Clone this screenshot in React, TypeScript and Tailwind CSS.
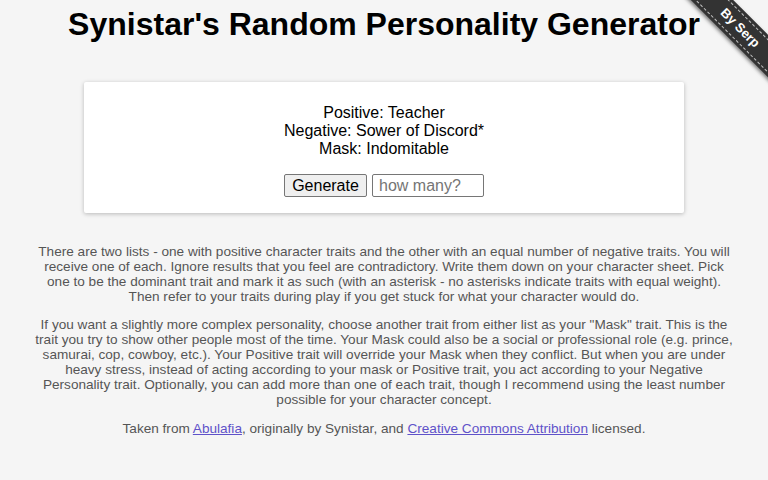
import React from 'react';

const App: React.FC = () => {
  return (
    <div className="relative min-h-[480px] w-full overflow-hidden bg-[#f5f5f5] font-['Liberation_Sans',Arial,sans-serif]">
      {/* Ribbon */}
      <div className="absolute right-[-57px] top-[13px] w-[170px] rotate-45 bg-[#333] py-[3px] shadow-[0_2px_4px_rgba(0,0,0,0.5)]">
        <div className="border-y border-dashed border-white/70 py-[3px] text-center text-[13px] font-bold leading-[16px] text-white">
          By Serp
        </div>
      </div>

      <h1 className="pt-[6px] text-center text-[32px] font-bold leading-[37px] text-black">
        Synistar's Random Personality Generator
      </h1>

      {/* Card */}
      <div className="mx-auto mt-[39px] w-[600px] rounded-[2px] bg-white pb-[16px] pt-[22px] text-center shadow-[0_1px_4px_rgba(0,0,0,0.25)]">
        <div className="text-[16px] leading-[18px] text-black">
          <div>Positive: Teacher</div>
          <div>Negative: Sower of Discord*</div>
          <div>Mask: Indomitable</div>
        </div>
        <div className="mt-[16px] flex items-center justify-center gap-[5px]">
          <button className="h-[23px] w-[83px] rounded-[2px] border border-[#767676] bg-[#efefef] text-[16px] leading-[18px] text-black">
            Generate
          </button>
          <input
            placeholder="how many?"
            className="h-[23px] w-[112px] rounded-[2px] border border-[#767676] bg-white px-[6px] text-[16px] text-black placeholder:text-[#757575]"
          />
        </div>
      </div>

      {/* Description */}
      <div className="mx-auto mt-[31px] w-[700px] text-center text-[13.6px] leading-[15px] text-[#555]">
        <p>
          There are two lists - one with positive character traits and the other with an equal number of negative traits. You will receive one of each. Ignore results that you feel are contradictory. Write them down on your character sheet. Pick one to be the dominant trait and mark it as such (with an asterisk - no asterisks indicate traits with equal weight). Then refer to your traits during play if you get stuck for what your character would do.
        </p>
        <p className="mt-[13px]">
          If you want a slightly more complex personality, choose another trait from either list as your "Mask" trait. This is the trait you try to show other people most of the time. Your Mask could also be a social or professional role (e.g. prince, samurai, cop, cowboy, etc.). Your Positive trait will override your Mask when they conflict. But when you are under heavy stress, instead of acting according to your mask or Positive trait, you act according to your Negative Personality trait. Optionally, you can add more than one of each trait, though I recommend using the least number possible for your character concept.
        </p>
        <p className="mt-[14px]">
          Taken from <a href="#" className="text-[#5f52c9] underline">Abulafia</a>, originally by Synistar, and{' '}
          <a href="#" className="text-[#5f52c9] underline">Creative Commons Attribution</a> licensed.
        </p>
      </div>
    </div>
  );
};

export default App;
